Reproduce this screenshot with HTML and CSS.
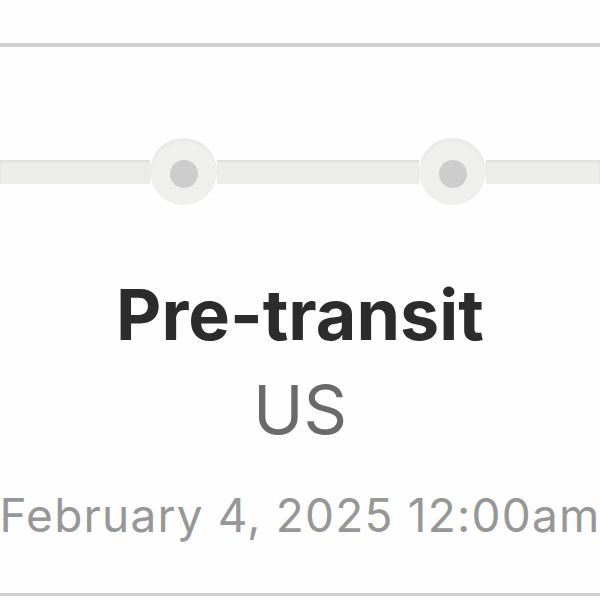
FILE: index.html
```html
<!DOCTYPE html>
<html lang="en">
<head>
<meta charset="utf-8">
<title>Tracking</title>
<link rel="stylesheet" href="styles.css">
</head>
<body>
<section class="card">
  <div class="stepper">
    <div class="seg seg-first"></div>
    <div class="node"><span class="dot"></span></div>
    <div class="seg seg-mid"></div>
    <div class="node"><span class="dot"></span></div>
    <div class="seg seg-last"></div>
  </div>
  <h1 class="status">Pre-transit</h1>
  <p class="place">US</p>
  <p class="date">February 4, 2025 12:00am</p>
</section>
</body>
</html>
```

FILE: styles.css
```css
html, body {
  margin: 0;
  padding: 0;
  background: #fefefe;
  overflow: hidden;
}

body {
  width: 600px;
  height: 600px;
  padding-top: 43px;
  box-sizing: border-box;
  font-family: Inter, "Noto Sans", sans-serif;
}

.card {
  border-top: 4px solid #cfcfcf;
  border-bottom: 3px solid #cfcfcf;
  display: flex;
  flex-direction: column;
  align-items: center;
  padding-top: 91px;
  padding-bottom: 55px;
}

.stepper {
  display: flex;
  align-items: center;
  width: 100%;
  height: 67px;
}

.seg {
  height: 24px;
  background: #ecece9;
  box-shadow: inset 0 2px 2px rgba(0, 0, 0, 0.06);
}

.seg-first { width: 150px; }
.seg-mid { width: 202px; }
.seg-last { flex: 1; }

.node {
  width: 67px;
  height: 67px;
  border-radius: 50%;
  background: #efefed;
  box-shadow: inset 0 3px 3px rgba(0, 0, 0, 0.03);
  display: flex;
  align-items: center;
  justify-content: center;
  flex: none;
}

.dot {
  width: 28px;
  height: 28px;
  border-radius: 50%;
  background: #cdcdcd;
  margin-top: 4px;
}

.status {
  margin: 75px 0 0;
  font-size: 70px;
  line-height: 1;
  font-weight: 700;
  color: #2c2c2c;
  letter-spacing: 0;
}

.place {
  margin: 25px 0 0;
  font-size: 68px;
  line-height: 1;
  font-weight: 400;
  color: #6a6a6a;
}

.date {
  margin: 49px 0 0;
  font-size: 46px;
  line-height: 1;
  font-weight: 400;
  color: #979797;
  letter-spacing: 1.2px;
  white-space: nowrap;
}
```
